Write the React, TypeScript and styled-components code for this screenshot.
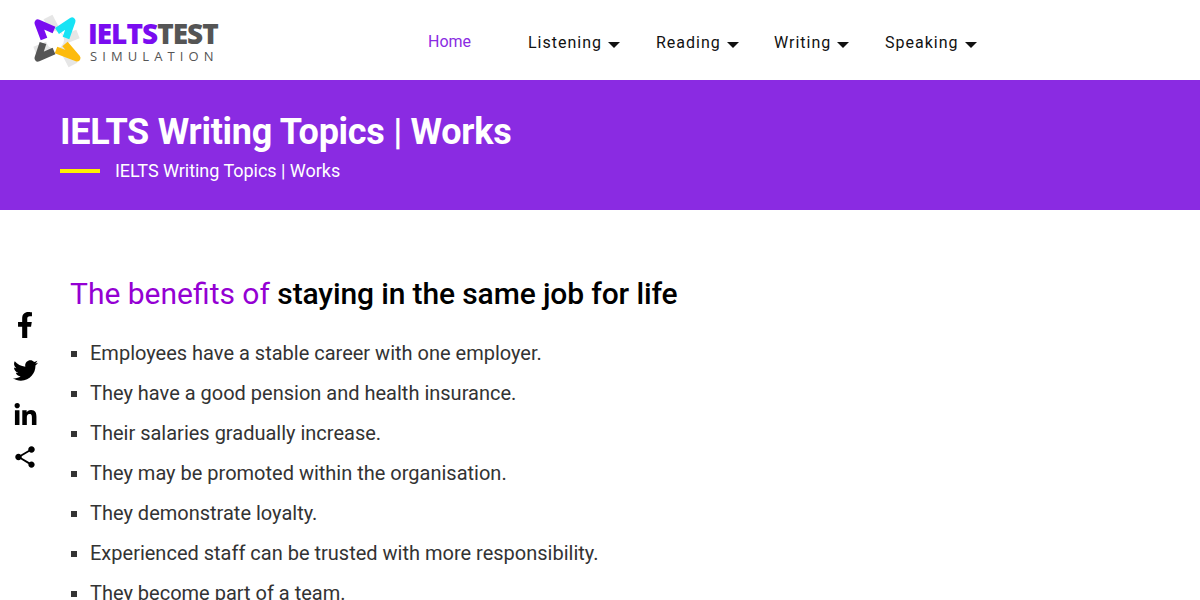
import { createGlobalStyle } from "styled-components";
import styled from "styled-components";
import { FaFacebookF, FaLinkedinIn, FaTwitter } from "react-icons/fa";
import { MdShare } from "react-icons/md";

const GlobalStyle = createGlobalStyle`
  html, body {
    margin: 0;
    height: 100%;
    overflow: hidden;
    background: #fff;
    font-family: Roboto, "Liberation Sans", sans-serif;
  }
`;

const Page = styled.div`
  position: relative;
  height: 600px;
  overflow: hidden;
`;

const Header = styled.header`
  display: flex;
  height: 80px;
  background: #fff;
`;

const LogoBox = styled.a`
  display: flex;
  align-items: flex-start;
  width: 428px;
  padding: 12px 0 0 28px;
  box-sizing: border-box;
`;

const LogoText = styled.div`
  display: flex;
  flex-direction: column;
  padding-top: 7px;
`;

const LogoTitle = styled.div`
  font-family: "Open Sans", sans-serif;
  font-size: 28px;
  line-height: 28px;
  font-weight: 800;
  letter-spacing: -1px;
  color: #555;
  white-space: nowrap;
`;

const LogoAccent = styled.span`
  color: #7a0cf0;
`;

const LogoSub = styled.div`
  margin: 2px 0 0 2px;
  font-family: "Open Sans", sans-serif;
  font-size: 13px;
  line-height: 14px;
  letter-spacing: 5.1px;
  color: #555;
`;

const Nav = styled.nav`
  display: flex;
  align-items: center;
  padding-top: 4px;
`;

const NavItem = styled.a<{ $active?: boolean; $width: number }>`
  display: flex;
  align-items: center;
  width: ${(p) => p.$width}px;
  margin-top: ${(p) => (p.$active ? -2 : 0)}px;
  font-size: 16px;
  letter-spacing: ${(p) => (p.$active ? 0 : 1)}px;
  color: ${(p) => (p.$active ? "#8a2be2" : "#111")};
  white-space: nowrap;
`;

const Caret = styled.span`
  width: 0;
  height: 0;
  margin: 6px 0 0 6px;
  border-left: 6px solid transparent;
  border-right: 6px solid transparent;
  border-top: 6px solid #111;
`;

const Banner = styled.section`
  height: 130px;
  padding: 31px 60px 0;
  box-sizing: border-box;
  background: #8a2be2;
  color: #fff;
`;

const BannerTitle = styled.h1`
  margin: 0;
  font-size: 36px;
  line-height: 42px;
  font-weight: 700;
  letter-spacing: -0.29px;
`;

const Crumb = styled.div`
  display: flex;
  align-items: center;
  gap: 15px;
  margin-top: 7px;
  font-size: 18px;
  line-height: 22px;
  letter-spacing: -0.03px;
`;

const CrumbLine = styled.span`
  width: 40px;
  height: 4px;
  background: #fff000;
`;

const Main = styled.main`
  padding: 64px 70px 0;
`;

const Heading = styled.h2`
  margin: 0 0 19px;
  font-size: 30px;
  line-height: 40px;
  font-weight: 400;
  color: #9400d3;
`;

const HeadingStrong = styled.span`
  font-weight: 500;
  letter-spacing: -0.13px;
  color: #000;
`;

const List = styled.ul`
  margin: 0;
  padding: 0 0 0 20px;
  list-style: square;
`;

const Item = styled.li`
  height: 40px;
  font-size: 20px;
  line-height: 40px;
  color: #333;
`;

const Social = styled.div`
  position: absolute;
  left: 0;
  top: 302px;
  width: 50px;
  display: flex;
  flex-direction: column;
  align-items: center;
  color: #000;
`;

const SocialIcon = styled.a<{ $height: number; $size: number }>`
  display: flex;
  align-items: center;
  justify-content: center;
  height: ${(p) => p.$height}px;
  font-size: ${(p) => p.$size}px;
`;

const items = [
  "Employees have a stable career with one employer.",
  "They have a good pension and health insurance.",
  "Their salaries gradually increase.",
  "They may be promoted within the organisation.",
  "They demonstrate loyalty.",
  "Experienced staff can be trusted with more responsibility.",
  "They become part of a team.",
];

const Logo = () => (
  <svg width="60" height="60" viewBox="0 0 60 60">
    <path d="M20 5 L45 53" stroke="#e6e6e6" strokeWidth="10" />
    <path d="M7 39 L50 22" stroke="#e6e6e6" strokeWidth="9" />
    <circle cx="27" cy="28" r="9" fill="#fff" />
    <g fill="none" strokeWidth="7" strokeLinejoin="round">
      <path d="M26 18 L10 11 L16 27" stroke="#7a0cf0" />
      <path d="M29 19 L44 9 L38 26" stroke="#17e3f5" />
      <path d="M28 38 L49 46 L37 32" stroke="#fdbb0d" />
      <path d="M26 39 L10 46 L15 31" stroke="#555" />
    </g>
  </svg>
);

export default function App() {
  return (
    <Page>
      <GlobalStyle />
      <Header>
        <LogoBox>
          <Logo />
          <LogoText>
            <LogoTitle>
              <LogoAccent>IELTS</LogoAccent>TEST
            </LogoTitle>
            <LogoSub>SIMULATION</LogoSub>
          </LogoText>
        </LogoBox>
        <Nav>
          <NavItem $active $width={100}>Home</NavItem>
          <NavItem $width={128}>Listening<Caret /></NavItem>
          <NavItem $width={118}>Reading<Caret /></NavItem>
          <NavItem $width={111}>Writing<Caret /></NavItem>
          <NavItem $width={110}>Speaking<Caret /></NavItem>
        </Nav>
      </Header>
      <Banner>
        <BannerTitle>IELTS Writing Topics | Works</BannerTitle>
        <Crumb>
          <CrumbLine />
          IELTS Writing Topics | Works
        </Crumb>
      </Banner>
      <Main>
        <Heading>
          The benefits of <HeadingStrong>staying in the same job for life</HeadingStrong>
        </Heading>
        <List>
          {items.map((text) => (
            <Item key={text}>{text}</Item>
          ))}
        </List>
      </Main>
      <Social>
        <SocialIcon $height={46} $size={26}><FaFacebookF /></SocialIcon>
        <SocialIcon $height={44} $size={25}><FaTwitter /></SocialIcon>
        <SocialIcon $height={46} $size={25}><FaLinkedinIn /></SocialIcon>
        <SocialIcon $height={38} $size={26}><MdShare /></SocialIcon>
      </Social>
    </Page>
  );
}
